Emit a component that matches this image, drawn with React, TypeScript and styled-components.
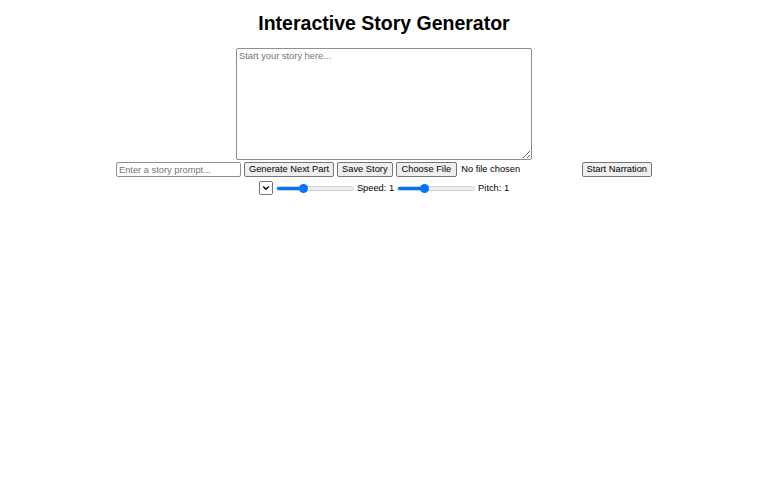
import React, { useState } from "react";
import styled, { createGlobalStyle } from "styled-components";

const GlobalStyle = createGlobalStyle`
  html, body {
    margin: 0;
    padding: 0;
    background: #ffffff;
  }
  body {
    font-family: "Liberation Sans", Arial, sans-serif;
    color: #000000;
  }
  * { box-sizing: border-box; }
`;

const Page = styled.div`
  display: flex;
  flex-direction: column;
  align-items: center;
  width: 768px;
  min-height: 480px;
`;

const Title = styled.h1`
  margin: 12px 0 14px;
  font-size: 19.5px;
  line-height: 22px;
  font-weight: 700;
  text-align: center;
`;

const StoryArea = styled.textarea`
  width: 296px;
  height: 112px;
  margin: 0;
  padding: 2px;
  border: 1px solid #8f8f8f;
  border-radius: 2px;
  font-family: "Liberation Sans", Arial, sans-serif;
  font-size: 9.3px;
  line-height: 11px;
  resize: both;
  &::placeholder { color: #757575; }
`;

const Row = styled.div<{ $top: number; $height: number }>`
  display: flex;
  align-items: center;
  justify-content: center;
  gap: 3px;
  margin-top: ${(p) => p.$top}px;
  height: ${(p) => p.$height}px;
`;

const PromptInput = styled.input`
  width: 125px;
  height: 15px;
  margin: 0;
  padding: 0 2px;
  border: 1px solid #8f8f8f;
  border-radius: 2px;
  font-family: "Liberation Sans", Arial, sans-serif;
  font-size: 9.3px;
  &::placeholder { color: #757575; }
`;

const Button = styled.button`
  height: 15px;
  margin: 0;
  padding: 0 4px;
  background: #efefef;
  border: 1px solid #767676;
  border-radius: 2px;
  font-family: "Liberation Sans", Arial, sans-serif;
  font-size: 9.3px;
  line-height: 13px;
  color: #000000;
  white-space: nowrap;
  cursor: default;
`;

const FileField = styled.label`
  display: flex;
  align-items: center;
  gap: 4px;
  width: 183px;
  height: 15px;
  font-size: 9.3px;
  line-height: 13px;
  white-space: nowrap;
`;

const FileButton = styled.span`
  display: block;
  height: 15px;
  padding: 0 5px;
  background: #efefef;
  border: 1px solid #767676;
  border-radius: 2px;
  line-height: 13px;
`;

const HiddenFile = styled.input`
  display: none;
`;

const SelectBox = styled.span`
  position: relative;
  display: inline-flex;
  align-items: center;
  justify-content: center;
  width: 14px;
  height: 14px;
  border: 1px solid #767676;
  border-radius: 2px;
  background: #ffffff;
`;

const VoiceSelect = styled.select`
  position: absolute;
  inset: 0;
  width: 100%;
  height: 100%;
  opacity: 0;
  margin: 0;
`;

const Range = styled.input`
  -webkit-appearance: none;
  appearance: none;
  width: 78px;
  height: 14px;
  margin: 0;
  padding: 0;
  background: transparent;
  &::-webkit-slider-runnable-track {
    height: 5px;
    border-radius: 3px;
    border: 1px solid #cfcfcf;
    background: linear-gradient(
      to right,
      #0075ff 0%,
      #0075ff var(--pct),
      #efefef var(--pct),
      #efefef 100%
    );
  }
  &::-webkit-slider-thumb {
    -webkit-appearance: none;
    width: 9px;
    height: 9px;
    margin-top: -3px;
    border-radius: 50%;
    background: #0075ff;
    border: none;
  }
`;

const Label = styled.span`
  font-size: 9.3px;
  white-space: nowrap;
`;

const Chevron = () => (
  <svg width="8" height="6" viewBox="0 0 8 6" aria-hidden="true">
    <path d="M1.2 1.5 L4 4.3 L6.8 1.5" fill="none" stroke="#000" strokeWidth="1.3" />
  </svg>
);

function Slider({ value, onChange }: { value: number; onChange: (v: number) => void }) {
  const pct = ((value - 0.5) / 1.5) * 100;
  return (
    <Range
      type="range"
      min={0.5}
      max={2}
      step={0.1}
      value={value}
      onChange={(e) => onChange(parseFloat(e.target.value))}
      style={{ ["--pct" as any]: `calc(${pct}% + ${4.5 - pct * 0.09}px)` }}
    />
  );
}

export default function App() {
  const [speed, setSpeed] = useState(1);
  const [pitch, setPitch] = useState(1);
  return (
    <>
      <GlobalStyle />
      <Page>
        <Title>Interactive Story Generator</Title>
        <StoryArea placeholder="Start your story here..." />
        <Row $top={2} $height={15}>
          <PromptInput placeholder="Enter a story prompt..." />
          <Button>Generate Next Part</Button>
          <Button>Save Story</Button>
          <FileField>
            <FileButton>Choose File</FileButton>
            <span>No file chosen</span>
            <HiddenFile type="file" />
          </FileField>
          <Button>Start Narration</Button>
        </Row>
        <Row $top={4} $height={14}>
          <SelectBox>
            <Chevron />
            <VoiceSelect />
          </SelectBox>
          <Slider value={speed} onChange={setSpeed} />
          <Label>Speed: {speed}</Label>
          <Slider value={pitch} onChange={setPitch} />
          <Label>Pitch: {pitch}</Label>
        </Row>
      </Page>
    </>
  );
}
